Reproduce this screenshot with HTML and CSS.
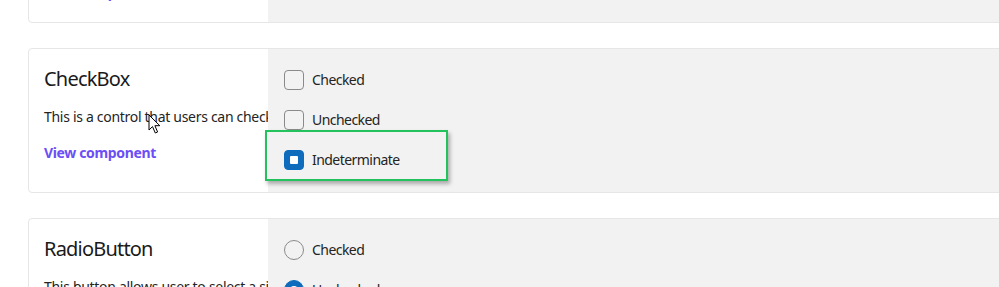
FILE: index.html
```html
<!DOCTYPE html>
<html lang="en">
<head>
<meta charset="utf-8">
<title>Controls</title>
<link rel="stylesheet" href="styles.css">
</head>
<body>
<div class="page">
  <section class="card card--short">
    <div class="card-info">
      <h2 class="card-title">Button</h2>
      <p class="card-desc">This is a control that users can click</p>
      <a class="card-link" href="#">View component</a>
    </div>
    <div class="card-demo"></div>
  </section>

  <section class="card">
    <div class="card-info">
      <h2 class="card-title">CheckBox</h2>
      <p class="card-desc">This is a control that users can check or uncheck</p>
      <a class="card-link" href="#">View component</a>
    </div>
    <div class="card-demo">
      <div class="option"><span class="check"></span><span class="option-label">Checked</span></div>
      <div class="option"><span class="check"></span><span class="option-label">Unchecked</span></div>
      <div class="option"><span class="check check--mixed"><span class="check-mark"></span></span><span class="option-label">Indeterminate</span></div>
    </div>
  </section>

  <section class="card">
    <div class="card-info">
      <h2 class="card-title">RadioButton</h2>
      <p class="card-desc">This button allows user to select a single option</p>
      <a class="card-link" href="#">View component</a>
    </div>
    <div class="card-demo">
      <div class="option"><span class="radio"></span><span class="option-label">Checked</span></div>
      <div class="option"><span class="radio radio--on"><span class="radio-dot"></span></span><span class="option-label">Unchecked</span></div>
    </div>
  </section>

  <div class="highlight"></div>
  <svg class="cursor" width="14" height="22" viewBox="0 0 14 22" aria-hidden="true">
    <path d="M1 1 L1 16 L4.5 12.6 L7.3 19 L9.6 18 L6.9 11.7 L11.8 11.7 Z" fill="#fff" stroke="#000" stroke-width="1" stroke-linejoin="round"/>
  </svg>
</div>
</body>
</html>
```

FILE: styles.css
```css
html, body {
  margin: 0;
  padding: 0;
  background: #ffffff;
  overflow: hidden;
}

body {
  font-family: "Noto Sans", "Open Sans", sans-serif;
  color: #242424;
}

.page {
  position: relative;
  display: flex;
  flex-direction: column;
  gap: 25px;
  padding-left: 28px;
}

.card {
  display: flex;
  box-sizing: border-box;
  width: 1100px;
  height: 145px;
  flex: none;
  background: #ffffff;
  border: 1px solid #e6e6e6;
  border-radius: 4px;
  overflow: hidden;
}

.card--short {
  height: 135px;
  margin-top: -112px;
}

.card-info {
  box-sizing: border-box;
  width: 239px;
  flex: none;
  padding: 16px 0 0 15px;
  overflow: hidden;
  display: flex;
  flex-direction: column;
  align-items: flex-start;
}

.card-title {
  margin: 0;
  font-size: 20px;
  line-height: 28px;
  font-weight: 400;
  letter-spacing: -0.8px;
  color: #1a1a1a;
}

.card-desc {
  margin: 14px 0 0;
  font-size: 14px;
  line-height: 20px;
  letter-spacing: -0.3px;
  white-space: nowrap;
  color: #242424;
}

.card-link {
  margin-top: 16px;
  font-size: 14px;
  line-height: 20px;
  font-weight: 700;
  letter-spacing: -0.35px;
  color: #6b4ef6;
  text-decoration: none;
}

.card-demo {
  flex: 1;
  background: #f2f2f2;
  padding: 11px 16px;
}

.option {
  display: flex;
  align-items: center;
  gap: 8px;
  height: 40px;
}

.option-label {
  font-size: 14px;
  line-height: 20px;
  letter-spacing: -0.55px;
  color: #242424;
}

.check {
  box-sizing: border-box;
  width: 20px;
  height: 20px;
  border: 1px solid #8a8a8a;
  border-radius: 4px;
  display: flex;
  align-items: center;
  justify-content: center;
}

.check--mixed {
  background: #0f6cbd;
  border-color: #0f6cbd;
}

.check-mark {
  width: 8px;
  height: 8px;
  background: #ffffff;
  border-radius: 1px;
}

.radio {
  box-sizing: border-box;
  width: 20px;
  height: 20px;
  border: 1px solid #8a8a8a;
  border-radius: 50%;
  display: flex;
  align-items: center;
  justify-content: center;
}

.radio--on {
  background: #0f6cbd;
  border-color: #0f6cbd;
}

.radio-dot {
  width: 8px;
  height: 8px;
  border-radius: 50%;
  background: #ffffff;
}

.highlight {
  position: absolute;
  left: 265px;
  top: 130px;
  width: 179px;
  height: 47px;
  border: 2px solid #22c25c;
  box-shadow: 2px 3px 4px rgba(0, 0, 0, 0.3);
}

.cursor {
  position: absolute;
  left: 148px;
  top: 114px;
}
```
